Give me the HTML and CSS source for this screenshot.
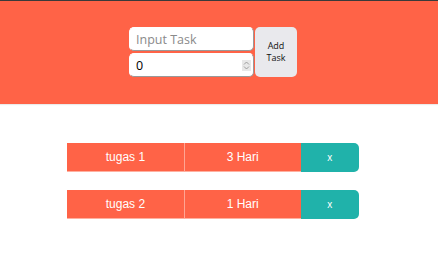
FILE: index.html
```html
<!DOCTYPE html>
<html lang="en">
<head>
  <meta charset="UTF-8" />
  <title>Todo</title>
  <link rel="stylesheet" href="styles.css">
</head>
<body>
  <div class="header">
    <form class="form" onsubmit="return false">
      <div class="fields">
        <input type="text" class="field" placeholder="Input Task" />
        <div class="num">
          <input type="number" class="field" value="0" />
          <span class="spin">
            <svg width="7" height="9" viewBox="0 0 7 9"><path d="M1 3.5 L3.5 1 L6 3.5 M1 5.5 L3.5 8 L6 5.5" fill="none" stroke="#8c8c8c" stroke-width="0.8"/></svg>
          </span>
        </div>
      </div>
      <button class="add">Add<br>Task</button>
    </form>
  </div>

  <div class="list">
    <div class="row">
      <div class="cell">tugas 1</div>
      <div class="cell">3 Hari</div>
      <div class="cell del">x</div>
    </div>
    <div class="row">
      <div class="cell">tugas 2</div>
      <div class="cell">1 Hari</div>
      <div class="cell del">x</div>
    </div>
  </div>
</body>
</html>
```

FILE: styles.css
```css
* {
  box-sizing: border-box;
}
body {
  margin: 0;
  border-top: 1px solid #3a3a3a;
  font-family: 'Liberation Sans', Arial, sans-serif;
  background: #fff;
}
.header {
  background: #ff6347;
  height: 103px;
  padding: 26px 12px 0 0;
  box-shadow: 0 1px 1px rgba(0,0,0,0.08);
}
.form {
  display: flex;
  justify-content: center;
  gap: 1px;
}
.fields {
  display: flex;
  flex-direction: column;
  gap: 2px;
}
.num {
  position: relative;
}
.field {
  width: 125px;
  height: 24px;
  padding: 0 6px;
  border: 1px solid #fff;
  border-right-color: #999;
  border-bottom-color: #999;
  border-radius: 5px;
  font-family: 'Open Sans', sans-serif;
  font-size: 12.5px;
  color: #000;
  outline: none;
  display: block;
}
.field::placeholder {
  color: #8a8a8a;
}
.field::-webkit-inner-spin-button,
.field::-webkit-outer-spin-button {
  -webkit-appearance: none;
  margin: 0;
}
.spin {
  position: absolute;
  right: 3px;
  top: 7px;
  width: 9px;
  height: 11px;
  background: #e8e8e8;
  display: flex;
  align-items: center;
  justify-content: center;
}
.add {
  width: 42px;
  height: 50px;
  border: none;
  border-radius: 5px;
  background: #e9e9ed;
  font-family: 'Open Sans', sans-serif;
  font-size: 9px;
  line-height: 12px;
  color: #111;
  padding: 0;
}
.list {
  padding: 39px 12px 0 0;
  display: flex;
  flex-direction: column;
  align-items: center;
  gap: 18px;
}
.row {
  display: flex;
  width: 292px;
  height: 29px;
}
.cell {
  flex: 0 0 40%;
  display: flex;
  align-items: center;
  justify-content: center;
  background: #ff6347;
  color: #fff;
  font-size: 12px;
  border-bottom: 1px solid #ffb0a0;
}
.cell + .cell {
  border-left: 1px solid #ffa593;
}
.del {
  flex-basis: 20%;
  background: #20b2aa;
  border: none;
  border-radius: 0 5px 5px 0;
  font-size: 10px;
}
.cell + .del {
  border-left: none;
}
```
